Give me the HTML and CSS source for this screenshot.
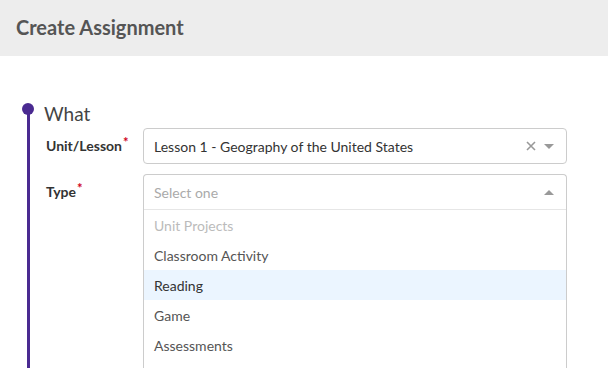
FILE: index.html
```html
<!DOCTYPE html>
<html>
<head>
<meta charset="utf-8">
<link rel="stylesheet" href="styles.css">
</head>
<body>
<div class="header"><h1 class="title">Create Assignment</h1></div>
<div class="content">
  <div class="timeline"><span class="dot"></span><span class="line"></span></div>
  <div class="section">
    <h2 class="section-title">What</h2>
    <div class="row">
      <label class="label">Unit/Lesson<span class="req">*</span></label>
      <div class="select">
        <span class="value">Lesson 1 - Geography of the United States</span>
        <svg class="clear" width="10" height="10" viewBox="0 0 10 10"><path d="M1 1L9 9M9 1L1 9" stroke="#999" stroke-width="1.6" fill="none"/></svg>
        <span class="caret down"></span>
      </div>
    </div>
    <div class="row">
      <label class="label">Type<span class="req">*</span></label>
      <div class="select open">
        <div class="control">
          <span class="placeholder">Select one</span>
          <span class="caret up"></span>
        </div>
        <ul class="menu">
          <li class="opt disabled">Unit Projects</li>
          <li class="opt">Classroom Activity</li>
          <li class="opt focused">Reading</li>
          <li class="opt">Game</li>
          <li class="opt">Assessments</li>
        </ul>
      </div>
    </div>
  </div>
</div>
</body>
</html>
```
FILE: styles.css
```css
* { box-sizing: border-box; }
html, body { margin: 0; padding: 0; height: 100%; overflow: hidden; background: #fff; }
body { font-family: Lato, "Noto Sans", sans-serif; color: #333; }
.header { height: 56px; background: #ededed; display: flex; align-items: center; padding-left: 16px; }
.title { margin: 0; font-size: 20px; font-weight: 700; color: #555; line-height: 1; padding-bottom: 2px; }
.content { display: flex; padding-top: 47px; height: calc(100% - 56px); }
.timeline { width: 44px; position: relative; flex: none; }
.dot { position: absolute; left: 22px; top: 0; width: 12px; height: 12px; border-radius: 50%; background: #4a2a91; }
.line { position: absolute; left: 26.5px; top: 6px; bottom: 0; width: 3px; background: #4a2a91; }
.section { flex: 1; padding-right: 41px; }
.section-title { margin: 0; font-size: 19px; font-weight: 400; color: #444; line-height: 22px; height: 25px; }
.row { display: flex; align-items: flex-start; margin-bottom: 10px; }
.label { width: 99px; flex: none; padding-left: 2px; font-weight: 700; font-size: 14px; color: #333; line-height: 36px; }
.req { color: #d0021b; font-size: 13px; position: relative; top: -4px; margin-left: 1px; }
.select { flex: 1; height: 36px; border: 1px solid #ccc; border-radius: 4px; display: flex; align-items: center; padding-left: 10px; padding-right: 12px; font-size: 14px; }
.value { flex: 1; color: #333; }
.clear { margin-right: 8px; }
.caret { width: 0; height: 0; border-left: 5px solid transparent; border-right: 5px solid transparent; }
.caret.down { border-top: 5px solid #999; }
.caret.up { border-bottom: 5px solid #999; }
.select.open { display: block; height: auto; padding: 0; border-radius: 4px 4px 0 0; border-bottom: none; }
.control { height: 35px; display: flex; align-items: center; padding-left: 10px; padding-right: 12px; border-bottom: 1px solid #e6e6e6; }
.placeholder { flex: 1; color: #aaa; }
.menu { list-style: none; margin: 0; padding: 0 0 20px; }
.opt { height: 30px; line-height: 32px; padding-left: 10px; color: #555; }
.opt.disabled { color: #bbb; }
.opt.focused { background: #ebf5ff; color: #333; }
```
